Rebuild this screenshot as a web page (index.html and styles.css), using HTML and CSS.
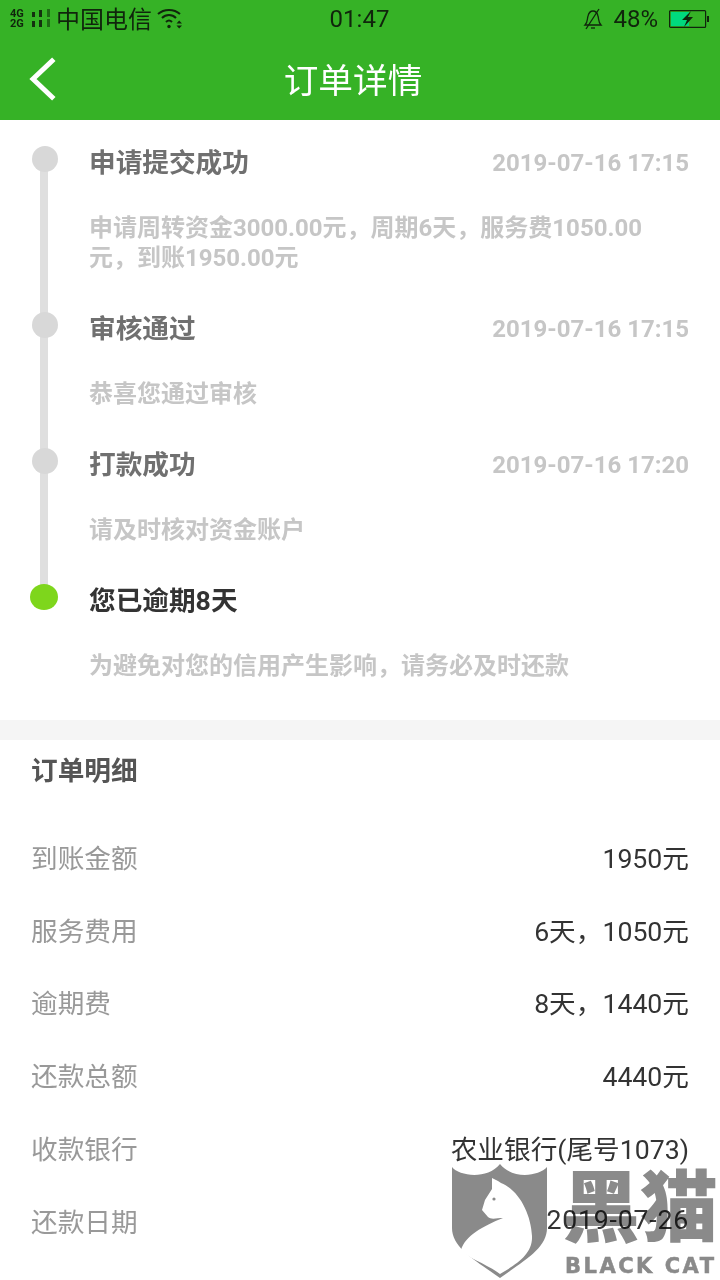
FILE: index.html
```html
<!DOCTYPE html>
<html lang="zh">
<head>
  <meta charset="utf-8">
  <meta name="viewport" content="width=device-width">
  <title>订单详情</title>
  <link rel="stylesheet" href="styles.css">
</head>
<body>
  <div class="top">
    <div class="status">
      <div class="status_left">
        <div class="net">
          <span>4G</span>
          <span>2G</span>
        </div>
        <svg class="bars" width="18" height="24" viewBox="0 0 18 24">
          <g fill="#14300f">
            <rect x="0" y="5" width="3" height="5"/><rect x="7" y="3" width="3" height="7"/>
            <rect x="0" y="14" width="3" height="6"/><rect x="7" y="13" width="3" height="7"/>
          </g>
          <g fill="#1d6a14">
            <rect x="15" y="2" width="3" height="8"/><rect x="15" y="12" width="3" height="8"/>
          </g>
        </svg>
        <span class="carrier">中国电信</span>
        <svg class="wifi" width="26" height="22" viewBox="0 0 26 22" fill="none" stroke="#10250c" stroke-width="2">
          <path d="M1 6 C7 0.5 17 0.5 23 6"/>
          <path d="M5 10 C9 6 15 6 19 10"/>
          <path d="M9 14 C11 12 13 12 15 14"/>
          <circle cx="12" cy="18.5" r="1.7" fill="#10250c" stroke="none"/>
          <path d="M19.5 15.5 L25 15.5 L22.2 12.5 Z M19.5 17.5 L25 17.5 L22.2 20.5 Z" fill="#10250c" stroke="none"/>
        </svg>
      </div>
      <span class="clock">01:47</span>
      <div class="status_right">
        <svg class="bell" width="20" height="22" viewBox="0 0 20 22" fill="none" stroke="#10250c" stroke-width="1.3">
          <path d="M2 17 C5 14 4 11 5 8 C6 4 8 3 10 3 C12 3 14 4 15 8 C16 11 15 14 18 17 Z"/>
          <path d="M8 20 L12 20"/>
          <path d="M16 1 L3 21"/>
        </svg>
        <span class="percent">48%</span>
        <svg class="battery" width="40" height="18" viewBox="0 0 40 18">
          <rect x="0.6" y="0.6" width="36" height="16.8" rx="1" fill="none" stroke="#10250c" stroke-width="1.2"/>
          <rect x="2" y="2" width="18" height="14" fill="#00d97e"/>
          <rect x="38" y="6" width="2" height="6" fill="#10250c"/>
          <path d="M22 1 L13 10 L18 10 L15 17 L24 7 L19 7 Z" fill="#10250c"/>
        </svg>
      </div>
    </div>
    <div class="nav">
      <svg class="back" width="28" height="44" viewBox="0 0 28 44" fill="none" stroke="#fff" stroke-width="5">
        <path d="M24 4 L5 22 L24 40" stroke-linecap="square"/>
      </svg>
      <h1 class="nav_title">订单详情</h1>
    </div>
  </div>

  <div class="steps">
    <div class="step">
      <div class="step_head">
        <b class="step_name">申请提交成功</b>
        <span class="step_time">2019-07-16 17:15</span>
      </div>
      <p class="step_text">申请周转资金3000.00元，周期6天，服务费1050.00元，到账1950.00元</p>
    </div>
    <div class="step">
      <div class="step_head">
        <b class="step_name">审核通过</b>
        <span class="step_time">2019-07-16 17:15</span>
      </div>
      <p class="step_text">恭喜您通过审核</p>
    </div>
    <div class="step">
      <div class="step_head">
        <b class="step_name">打款成功</b>
        <span class="step_time">2019-07-16 17:20</span>
      </div>
      <p class="step_text">请及时核对资金账户</p>
    </div>
    <div class="step step_now">
      <div class="step_head">
        <b class="step_name">您已逾期8天</b>
      </div>
      <p class="step_text">为避免对您的信用产生影响，请务必及时还款</p>
    </div>
  </div>

  <div class="detail">
    <h2 class="detail_title">订单明细</h2>
    <div class="row"><span class="row_key">到账金额</span><span class="row_val">1950元</span></div>
    <div class="row"><span class="row_key">服务费用</span><span class="row_val">6天，1050元</span></div>
    <div class="row"><span class="row_key">逾期费</span><span class="row_val">8天，1440元</span></div>
    <div class="row"><span class="row_key">还款总额</span><span class="row_val">4440元</span></div>
    <div class="row"><span class="row_key">收款银行</span><span class="row_val">农业银行(尾号1073)</span></div>
    <div class="row"><span class="row_key">还款日期</span><span class="row_val row_date">2019-07-26</span></div>
  </div>

  <!-- site stamp, multiplied over the last rows so their text stays readable -->
  <div class="stamp">
    <svg class="shield" width="98" height="116" viewBox="0 0 98 116">
      <path d="M1 3 C8 12 36 16 49 0 C62 16 88 12 96 3 L96 64 C96 84 74 96 49 114 C24 96 1 84 1 64 Z" fill="#8a8a8a"/>
      <path d="M41 14 L47 17 L50 19 C68 26 80 50 81 72 C82 90 66 100 49 110 C36 100 16 94 10 86 C14 72 32 62 52 54 C46 54 40 56 37 53 L31 46 L34 36 L41 25 Z" fill="#fff"/>
      <circle cx="43" cy="35" r="1.6" fill="#8a8a8a"/>
    </svg>
    <div class="stamp_words">
      <div class="stamp_cn">黑猫</div>
      <div class="stamp_en">BLACK CAT</div>
    </div>
  </div>
</body>
</html>
```

FILE: styles.css
```css
*, *:before, *:after {
  box-sizing: border-box;
}
html, body {
  height: 100%;
}
body {
  margin: 0;
  width: 720px;
  height: 1280px;
  overflow: hidden;
  position: relative;
  background: #fff;
  font-family: "Roboto", "Noto Sans CJK SC", sans-serif;
}

.top {
  background: #36b226;
  height: 120px;
}
.status {
  height: 38px;
  padding: 0 11px 0 10px;
  display: flex;
  align-items: center;
  justify-content: space-between;
  color: #10250c;
  font-size: 24px;
}
.status_left, .status_right {
  display: flex;
  align-items: center;
  width: 300px;
}
.status_right {
  justify-content: flex-end;
}
.net {
  display: flex;
  flex-direction: column;
  font-size: 11px;
  font-weight: 700;
  line-height: 10px;
  width: 22px;
}
.bars {
  margin-right: 6px;
}
.carrier {
  margin-bottom: 4px;
}
.wifi {
  margin-left: 5px;
}
.clock {
  font-size: 24px;
}
.bell {
  margin-right: 10px;
}
.percent {
  margin-right: 11px;
}
.nav {
  height: 82px;
  position: relative;
  display: flex;
  align-items: center;
  justify-content: center;
  padding: 0 14px 2px 0;
}
.back {
  position: absolute;
  left: 28px;
  top: 19px;
}
.nav_title {
  margin: 0;
  color: #fff;
  font-size: 34.67px;
  font-weight: 400;
}

.steps {
  padding: 24px 31px 0 31px;
  height: 600px;
}
.step {
  position: relative;
  padding-left: 58px;
}
/* dot and line on the left of each step */
.step:before {
  content: "";
  position: absolute;
  left: 1px;
  top: 2px;
  width: 26px;
  height: 26px;
  border-radius: 50%;
  background: #d8d8d8;
  z-index: 1;
}
.step:after {
  content: "";
  position: absolute;
  left: 9px;
  top: 20px;
  bottom: -10px;
  width: 8px;
  background: #dfdfdf;
}
.step_now:before {
  left: -1px;
  width: 28px;
  background: #7ed61c;
}
.step_now:after {
  display: none;
}
.step_head {
  display: flex;
  justify-content: space-between;
  align-items: center;
  height: 38px;
}
.step_name {
  font-size: 26.67px;
  font-weight: 700;
  color: #707070;
  margin-bottom: 6px;
}
.step_now .step_name {
  color: #333;
}
.step_time {
  font-size: 24px;
  font-weight: 700;
  color: #c6c6c6;
}
.step_text {
  margin: 31px 0 0 0;
  font-size: 24px;
  font-weight: 700;
  line-height: 30px;
  color: #c6c6c6;
  padding-bottom: 37px;
}

.detail {
  border-top: 20px solid #f5f5f5;
  padding: 0 31px;
}
.detail_title {
  margin: 0 0 18px 0;
  height: 62px;
  line-height: 62px;
  font-size: 26.67px;
  font-weight: 700;
  color: #555;
}
.row {
  display: flex;
  justify-content: space-between;
  align-items: center;
  height: 72.8px;
  font-size: 26.67px;
}
.row_key {
  color: #999;
}
.row_val {
  color: #333;
}
.row_date {
  letter-spacing: 0.8px;
}

.stamp {
  position: absolute;
  left: 451px;
  top: 1164px;
  width: 269px;
  display: flex;
  mix-blend-mode: multiply;
}
.stamp_words {
  margin-left: 13px;
  color: #8a8a8a;
}
.stamp_cn {
  font-size: 78px;
  font-weight: 900;
  line-height: 92px;
  white-space: nowrap;
}
.stamp_en {
  font-family: "DejaVu Sans", sans-serif;
  font-size: 21px;
  font-weight: 700;
  line-height: 20px;
  margin-left: 3px;
  letter-spacing: 2.5px;
  white-space: nowrap;
  -webkit-text-stroke: 0.5px #8a8a8a;
}
```
